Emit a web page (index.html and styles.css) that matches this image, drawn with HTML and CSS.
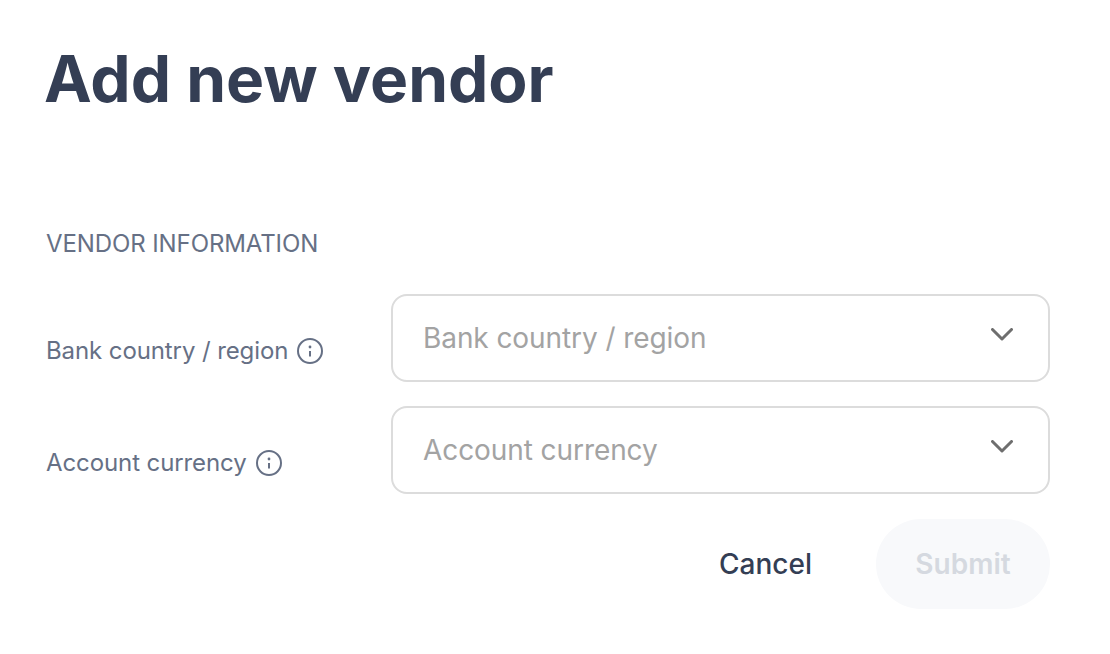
FILE: index.html
```html
<!DOCTYPE html>
<html>
<head>
  <title>Add new vendor</title>
  <meta name="viewport" content="width=device-width, initial-scale=1">
  <link rel="stylesheet" href="styles.css">
</head>
<body>
  <div class="page">
    <h1>Add new vendor</h1>
    <h2>VENDOR INFORMATION</h2>
    <div class="row">
      <div class="label">Bank country / region
        <svg class="info" viewBox="0 0 26 26"><circle cx="13" cy="13" r="12"/><path d="M13 13v5.5"/><circle class="dot" cx="13" cy="9" r="1.4"/></svg>
      </div>
      <div class="select"><span>Bank country / region</span>
        <svg class="chev" viewBox="0 0 22 13"><path d="M1.5 1.5l9.5 9.5 9.5-9.5"/></svg>
      </div>
    </div>
    <div class="row">
      <div class="label">Account currency
        <svg class="info" viewBox="0 0 26 26"><circle cx="13" cy="13" r="12"/><path d="M13 13v5.5"/><circle class="dot" cx="13" cy="9" r="1.4"/></svg>
      </div>
      <div class="select"><span>Account currency</span>
        <svg class="chev" viewBox="0 0 22 13"><path d="M1.5 1.5l9.5 9.5 9.5-9.5"/></svg>
      </div>
    </div>
    <div class="actions">
      <button class="cancel">Cancel</button>
      <button class="submit">Submit</button>
    </div>
  </div>
</body>
</html>
```
FILE: styles.css
```css
html {
  font-family: Inter, "Liberation Sans", sans-serif;
}
body {
  margin: 0;
  background-color: #fff;
}
.page {
  padding: 41px 60px 0 46px;
}
h1 {
  margin: 0 0 0 -2px;
  font-size: 64px;
  line-height: 76px;
  font-weight: 700;
  color: #343e54;
}
h2 {
  margin: 111px 0 0;
  font-size: 24px;
  line-height: 32px;
  font-weight: 400;
  letter-spacing: -0.1px;
  color: #667085;
}
.row {
  display: flex;
  align-items: center;
  margin-top: 24px;
}
h2 + .row {
  margin-top: 34px;
}
.label {
  display: flex;
  align-items: center;
  gap: 9px;
  width: 345px;
  flex-shrink: 0;
  padding-top: 25px;
  font-size: 24px;
  letter-spacing: -0.1px;
  color: #667085;
}
.info {
  width: 26px;
  height: 26px;
  fill: none;
  stroke: #667085;
  stroke-width: 2;
}
.info .dot {
  fill: #667085;
  stroke: none;
}
.select {
  flex: 1;
  display: flex;
  align-items: center;
  justify-content: space-between;
  height: 88px;
  padding: 0 35px 0 30px;
  box-sizing: border-box;
  border: 2px solid #dcdcdc;
  border-radius: 16px;
  font-size: 28px;
  letter-spacing: -0.08px;
  color: #a3a3a3;
}
.chev {
  width: 22px;
  height: 13px;
  margin-bottom: 7px;
  fill: none;
  stroke: #6e6e6e;
  stroke-width: 3;
  stroke-linecap: round;
  stroke-linejoin: round;
}
.actions {
  display: flex;
  justify-content: flex-end;
  align-items: center;
  gap: 24px;
  margin-top: 25px;
}
button {
  height: 90px;
  border: none;
  background: none;
  font-family: inherit;
  font-size: 28px;
}
.cancel {
  padding: 0 40px;
  font-weight: 500;
  color: #343e54;
}
.submit {
  width: 174px;
  border-radius: 45px;
  font-weight: 600;
  background-color: #f8f9fb;
  color: #d5d9e0;
}
```
